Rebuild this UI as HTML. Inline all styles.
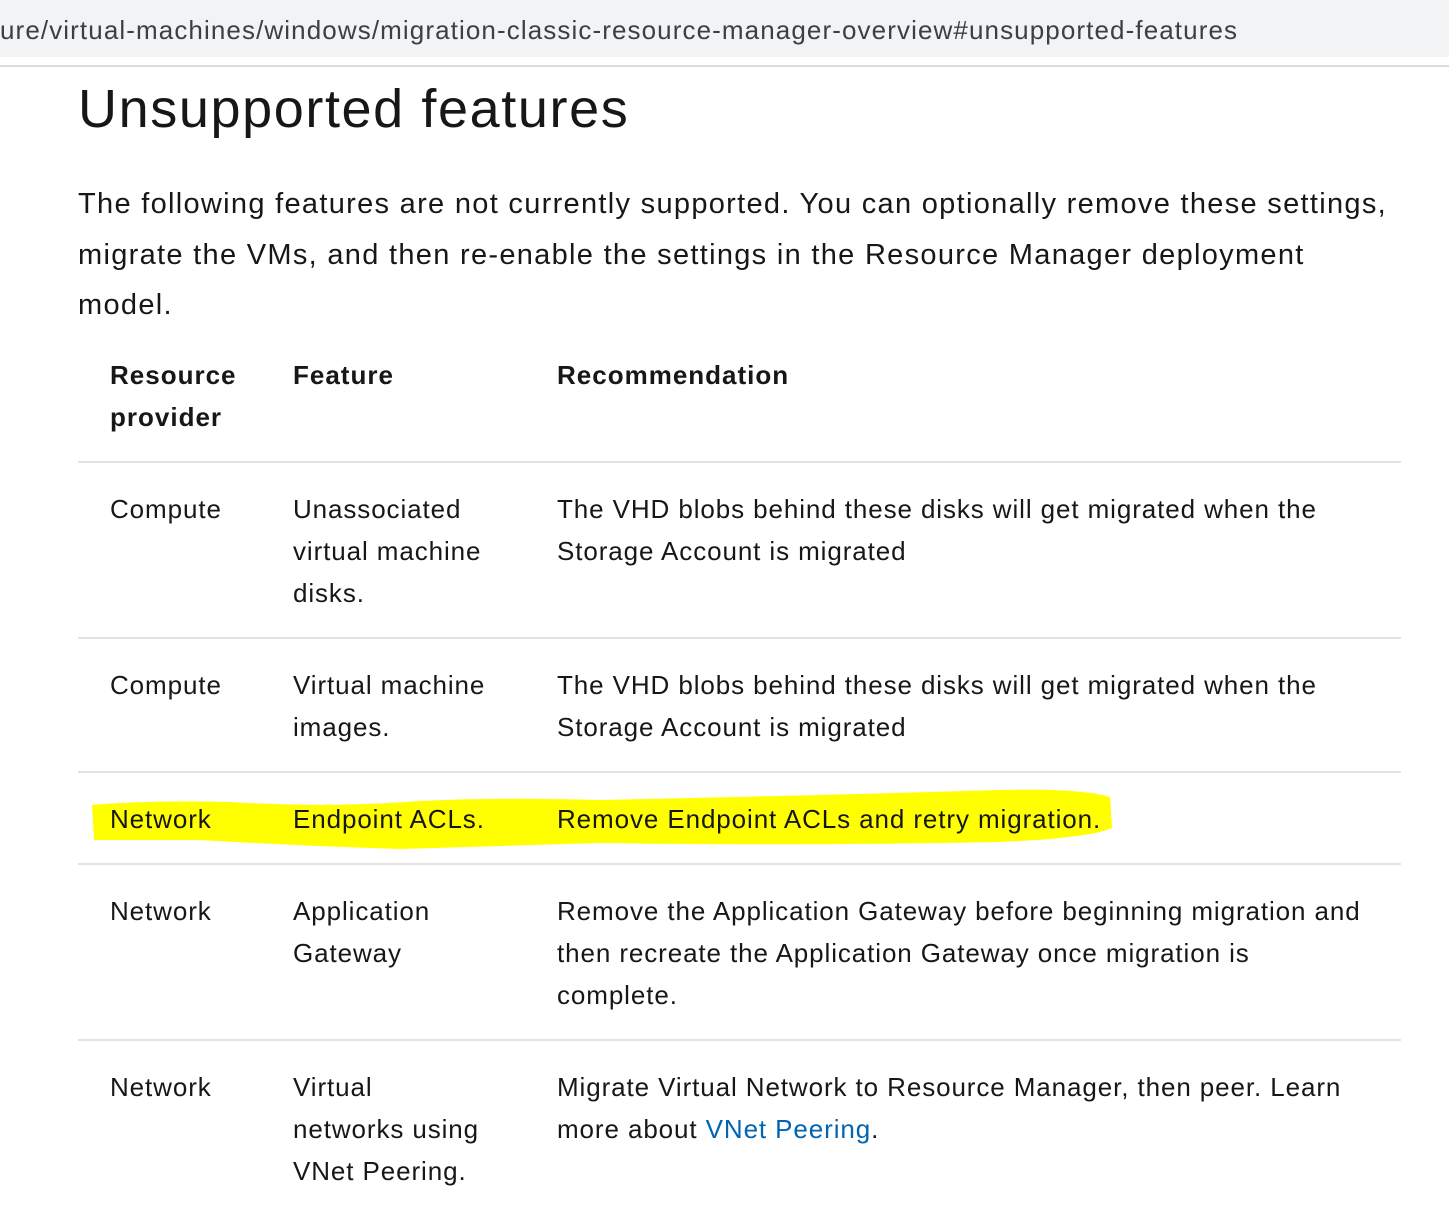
<!DOCTYPE html>
<html><head><meta charset="utf-8">
<style>
html,body{margin:0;padding:0;background:#fff;}
body{width:1449px;height:1231px;position:relative;overflow:hidden;font-family:"Liberation Sans","DejaVu Sans",sans-serif;color:#171717;}
.t{position:absolute;white-space:nowrap;font-size:26px;line-height:42px;letter-spacing:0.9px;}
.b{font-weight:bold;letter-spacing:1px;}
.hr{position:absolute;left:78px;width:1323px;height:2px;background:#e3e3e3;}
a{color:#0065b3;text-decoration:none;}
</style></head><body>
<div style="position:absolute;left:0;top:0;width:1449px;height:57px;background:#f1f3f4;"></div>
<div class="t" style="left:0;top:9px;font-size:26px;color:#3c4043;line-height:42px;letter-spacing:1.1px;">ure/virtual-machines/windows/migration-classic-resource-manager-overview#unsupported-features</div>
<div style="position:absolute;left:0;top:65px;width:1449px;height:2px;background:#dadce0;"></div>

<div class="t" style="left:78px;top:74px;font-size:54px;line-height:70px;letter-spacing:1.6px;">Unsupported features</div>

<div class="t" style="left:78px;top:179px;font-size:29px;line-height:51px;letter-spacing:1.3px;">The following features are not currently supported. You can optionally remove these settings,</div>
<div class="t" style="left:78px;top:230px;font-size:29px;line-height:51px;letter-spacing:1.3px;">migrate the VMs, and then re-enable the settings in the Resource Manager deployment</div>
<div class="t" style="left:78px;top:280px;font-size:29px;line-height:51px;letter-spacing:1.3px;">model.</div>

<div class="t b" style="left:110px;top:354px;">Resource</div>
<div class="t b" style="left:110px;top:396px;">provider</div>
<div class="t b" style="left:293px;top:354px;">Feature</div>
<div class="t b" style="left:557px;top:354px;">Recommendation</div>

<div class="hr" style="top:461px;"></div>
<div class="t" style="left:110px;top:488px;">Compute</div>
<div class="t" style="left:293px;top:488px;">Unassociated<br>virtual machine<br>disks.</div>
<div class="t" style="left:557px;top:488px;">The VHD blobs behind these disks will get migrated when the<br>Storage Account is migrated</div>

<div class="hr" style="top:637px;"></div>
<div class="t" style="left:110px;top:664px;">Compute</div>
<div class="t" style="left:293px;top:664px;">Virtual machine<br>images.</div>
<div class="t" style="left:557px;top:664px;">The VHD blobs behind these disks will get migrated when the<br>Storage Account is migrated</div>

<div class="hr" style="top:771px;"></div>
<svg style="position:absolute;left:0;top:0" width="1449" height="1231"><path d="M92 805 Q150 800 230 802 Q330 808 420 801 Q500 797 600 800 Q800 796 1000 790 Q1080 788 1110 797 L1112 828 Q1090 838 1000 842 Q800 846 600 843 Q500 846 400 849 Q300 846 200 840 Q140 840 94 840 Z" fill="#ffff00"/></svg>
<div class="t" style="left:110px;top:798px;">Network</div>
<div class="t" style="left:293px;top:798px;">Endpoint ACLs.</div>
<div class="t" style="left:557px;top:798px;">Remove Endpoint ACLs and retry migration.</div>

<div class="hr" style="top:863px;"></div>
<div class="t" style="left:110px;top:890px;">Network</div>
<div class="t" style="left:293px;top:890px;">Application<br>Gateway</div>
<div class="t" style="left:557px;top:890px;">Remove the Application Gateway before beginning migration and<br>then recreate the Application Gateway once migration is<br>complete.</div>

<div class="hr" style="top:1039px;"></div>
<div class="t" style="left:110px;top:1066px;">Network</div>
<div class="t" style="left:293px;top:1066px;">Virtual<br>networks using<br>VNet Peering.</div>
<div class="t" style="left:557px;top:1066px;">Migrate Virtual Network to Resource Manager, then peer. Learn<br>more about <a>VNet Peering</a>.</div>
</body></html>
